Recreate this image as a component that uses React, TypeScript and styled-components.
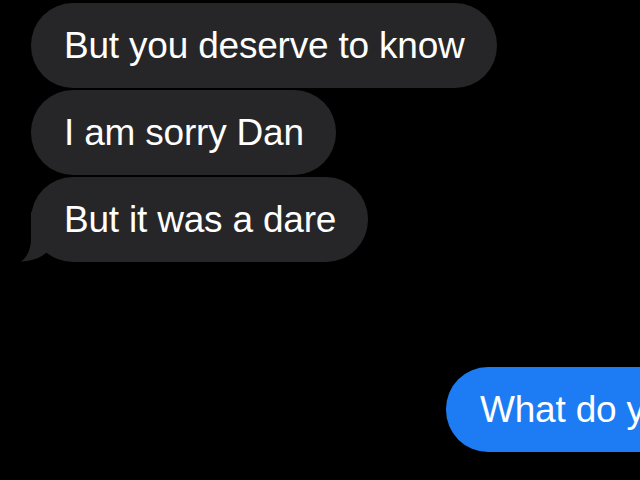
import React from "react";
import styled, { createGlobalStyle } from "styled-components";

const Global = createGlobalStyle`
  html, body { margin: 0; padding: 0; background: #000; overflow: hidden; }
  body { width: 640px; height: 480px; }
`;

const Thread = styled.div`
  display: flex;
  flex-direction: column;
  padding: 3px 0 0 31px;
  width: 640px;
  height: 480px;
  box-sizing: border-box;
  overflow: hidden;
  font-family: "Liberation Sans", Arial, sans-serif;
`;

const Group = styled.div<{ $gapAfter?: number }>`
  display: flex;
  flex-direction: column;
  align-items: flex-start;
  gap: 2px;
  margin-bottom: ${(p) => p.$gapAfter ?? 0}px;
`;

const OutRow = styled.div`
  display: flex;
  padding-left: 415px;
`;

const Bubble = styled.div<{ $out?: boolean }>`
  position: relative;
  box-sizing: border-box;
  height: 85px;
  display: flex;
  align-items: center;
  padding: 0 32px 0 ${(p) => (p.$out ? 34 : 33)}px;
  border-radius: 42px;
  background: ${(p) => (p.$out ? "#1d7cf4" : "#262628")};
  color: #fff;
  font-size: 37px;
  letter-spacing: -0.2px;
  white-space: nowrap;
  flex-shrink: 0;
`;

const Label = styled.span`
  position: relative;
`;

const Tail = styled.svg`
  position: absolute;
  left: -12px;
  bottom: 0;
  width: 40px;
  height: 50px;
`;

export default function App() {
  return (
    <>
      <Global />
      <Thread>
        <Group $gapAfter={105}>
          <Bubble>But you deserve to know</Bubble>
          <Bubble>I am sorry Dan</Bubble>
          <Bubble>
            <Tail viewBox="0 0 40 50">
              <path
                d="M12 0 L40 0 L40 38 L27 41 C21 46 13 49 2 49.5 C8 45 12 38 12 26 Z"
                fill="#262628"
              />
            </Tail>
            <Label>But it was a dare</Label>
          </Bubble>
        </Group>
        <OutRow>
          <Bubble $out>What do you mean?</Bubble>
        </OutRow>
      </Thread>
    </>
  );
}
